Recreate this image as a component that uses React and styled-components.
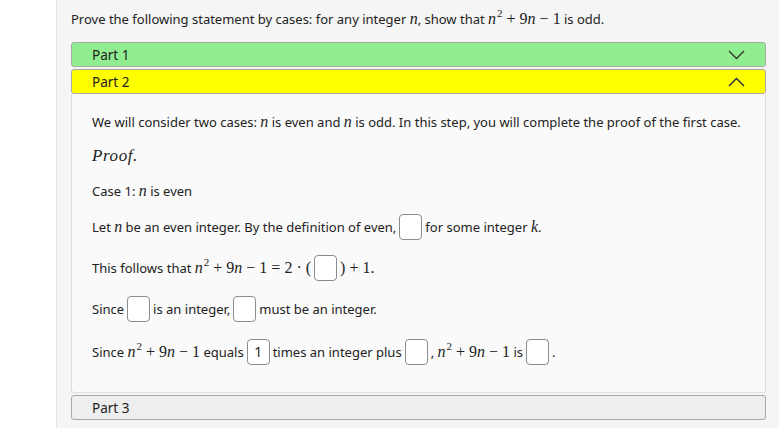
import React from "react";
import styled, { createGlobalStyle } from "styled-components";

const GlobalStyle = createGlobalStyle`
  html, body {
    margin: 0;
    padding: 0;
    background: #ffffff;
  }
  body {
    font-family: "Noto Sans", "Open Sans", sans-serif;
    color: #222;
  }
`;

const Page = styled.div`
  display: flex;
  width: 779px;
  height: 428px;
  overflow: hidden;
`;

const Gutter = styled.div`
  width: 56px;
  flex-shrink: 0;
  background: #ffffff;
`;

const Panel = styled.div`
  flex: 1;
  background: #f5f5f5;
  border-left: 1px solid #e3e3e3;
  padding: 9px 13px 0 14px;
`;

const Statement = styled.p`
  margin: 0 0 13px 0;
  font-size: 13px;
  line-height: 20px;
`;

const Accordion = styled.div`
  display: flex;
  flex-direction: column;
  gap: 2px;
`;

const Header = styled.div`
  display: flex;
  align-items: center;
  justify-content: space-between;
  height: 23px;
  padding: 0 20px 0 20px;
  background: ${(p) => p.$color};
  border: 1px solid #a9a9a9;
  border-radius: 3px;
  font-size: 13.5px;
  color: #222;
`;

const Chevron = styled.svg`
  width: 17px;
  height: 10px;
  display: block;
`;

const Body = styled.div`
  background: #fafafa;
  border: 1px solid #dedede;
  border-top: none;
  border-radius: 0 0 3px 3px;
  height: 299px;
  padding: 13px 20px 0 20px;
  margin-top: -2px;
  box-sizing: border-box;
`;

const Line = styled.p`
  margin: 0;
  font-size: 13px;
  height: ${(p) => p.$h || 36}px;
  line-height: ${(p) => p.$h || 36}px;
  white-space: nowrap;
`;

const M = styled.span`
  font-family: "Liberation Serif", "DejaVu Serif", serif;
  font-size: 16px;
  font-style: ${(p) => (p.$up ? "normal" : "italic")};
  margin: 0 ${(p) => p.$pad || 0}px;
`;

const Sup = styled.sup`
  font-family: "Liberation Serif", "DejaVu Serif", serif;
  font-size: 11px;
  font-style: normal;
  vertical-align: 7px;
  line-height: 0;
  margin-left: 1px;
`;

const ProofLabel = styled.span`
  font-family: "Liberation Serif", "DejaVu Serif", serif;
  font-style: italic;
  font-size: 17px;
  letter-spacing: 0.6px;
`;

const Blank = styled.span`
  display: inline-flex;
  align-items: center;
  justify-content: center;
  vertical-align: middle;
  box-sizing: border-box;
  width: 23px;
  height: 26px;
  margin: -4px 3px 0 3px;
  border: 1px solid #8c8c8c;
  border-radius: 4px;
  background: #ffffff;
  font-size: 14px;
  line-height: 1;
`;

const Down = () => (
  <Chevron viewBox="0 0 17 10">
    <path d="M1 1 L8.5 8.5 L16 1" fill="none" stroke="#333" strokeWidth="1.4" />
  </Chevron>
);

const Up = () => (
  <Chevron viewBox="0 0 17 10">
    <path d="M1 9 L8.5 1.5 L16 9" fill="none" stroke="#1f2a44" strokeWidth="1.4" />
  </Chevron>
);

const Poly = () => (
  <>
    <M>n</M>
    <Sup>2</Sup>
    <M $up $pad={4}>+</M>
    <M $up>9</M>
    <M>n</M>
    <M $up $pad={4}>−</M>
    <M $up>1</M>
  </>
);

export default function App() {
  return (
    <Page>
      <GlobalStyle />
      <Gutter />
      <Panel>
        <Statement>
          Prove the following statement by cases: for any integer <M>n</M>, show that{" "}
          <Poly /> is odd.
        </Statement>
        <Accordion>
          <Header $color="#90ee90">
            <span>Part 1</span>
            <Down />
          </Header>
          <Header $color="#ffff00">
            <span>Part 2</span>
            <Up />
          </Header>
          <Body>
            <Line $h={30}>
              We will consider two cases: <M>n</M> is even and <M>n</M> is odd. In this
              step, you will complete the proof of the first case.
            </Line>
            <Line $h={38}>
              <ProofLabel>Proof.</ProofLabel>
            </Line>
            <Line $h={32}>
              Case 1: <M>n</M> is even
            </Line>
            <Line $h={40}>
              Let <M>n</M> be an even integer. By the definition of even,
              <Blank />
              for some integer <M>k</M>.
            </Line>
            <Line $h={42}>
              This follows that <Poly />
              <M $up $pad={4}>=</M>
              <M $up>2</M>
              <M $up $pad={4}>·</M>
              <M $up>(</M>
              <Blank />
              <M $up>)</M>
              <M $up $pad={4}>+</M>
              <M $up>1.</M>
            </Line>
            <Line $h={40}>
              Since
              <Blank />
              is an integer,
              <Blank />
              must be an integer.
            </Line>
            <Line $h={46}>
              Since <Poly /> equals
              <Blank>1</Blank>
              times an integer plus
              <Blank />, <Poly /> is
              <Blank />.
            </Line>
          </Body>
          <Header $color="#eeeeee">
            <span>Part 3</span>
          </Header>
        </Accordion>
      </Panel>
    </Page>
  );
}
